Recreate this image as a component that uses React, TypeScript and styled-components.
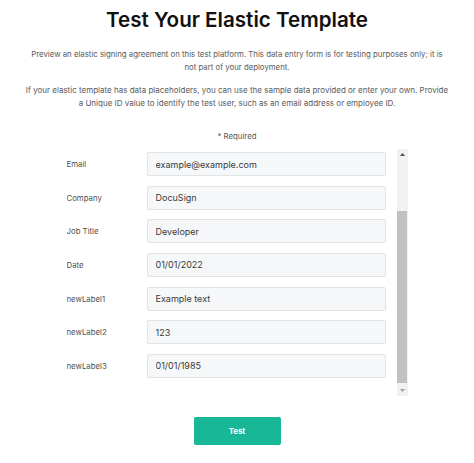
import React from 'react'
import styled, { createGlobalStyle } from 'styled-components'

const GlobalStyle = createGlobalStyle`
    html, body {
        margin: 0;
        padding: 0;
        background: #ffffff;
    }
    body {
        font-family: Inter, "Open Sans", "Liberation Sans", sans-serif;
        color: #222;
    }
`

const Page = styled.div`
    width: 474px;
    display: flex;
    flex-direction: column;
    align-items: center;
    padding-top: 6px;
`

const Title = styled.h1`
    margin: 0;
    font-size: 20.6px;
    font-weight: 600;
    line-height: 28px;
    color: #111;
`

const Intro = styled.p<{ $width: number; $size: number }>`
    margin: 0;
    width: ${(p) => p.$width}px;
    text-align: center;
    font-size: ${(p) => p.$size}px;
    line-height: 12.5px;
    color: #5a5a5a;
    & + & {
        margin-top: 11px;
    }
    &:first-of-type {
        margin-top: 14px;
    }
`

const Required = styled.div`
    margin-top: 21px;
    font-size: 7.8px;
    line-height: 12px;
    color: #555;
`

const FormBox = styled.div`
    margin-top: 7px;
    width: 341px;
    height: 247px;
    display: flex;
    overflow: hidden;
`

const FieldList = styled.div`
    flex: 1;
    display: flex;
    flex-direction: column;
    gap: 9.67px;
    padding-top: 3px;
`

const Row = styled.label`
    display: grid;
    grid-template-columns: 80px 239px;
    align-items: center;
    height: 24px;
`

const Label = styled.span`
    font-size: 7.8px;
    color: #4f4f4f;
`

const Input = styled.input`
    box-sizing: border-box;
    width: 239px;
    height: 24px;
    padding: 0 8px;
    border: 1px solid #e2e3e5;
    border-radius: 2px;
    background: #f6f7f8;
    font-family: Inter, "Open Sans", "Liberation Sans", sans-serif;
    font-size: 9px;
    color: #3a3a3a;
    outline: none;
`

const ScrollBar = styled.div`
    width: 11px;
    display: flex;
    flex-direction: column;
    background: #f1f1f1;
`

const ScrollButton = styled.div`
    height: 11px;
    display: flex;
    align-items: center;
    justify-content: center;
`

const ScrollTrack = styled.div`
    flex: 1;
    display: flex;
    flex-direction: column;
    padding: 0 0.5px;
`

const Thumb = styled.div<{ $offset: number; $size: number }>`
    margin-top: ${(p) => p.$offset}px;
    height: ${(p) => p.$size}px;
    background: #c1c1c1;
`

const TestButton = styled.button`
    margin-top: 21px;
    width: 87px;
    height: 28px;
    border: none;
    border-radius: 2px;
    background: #17b797;
    color: #fff;
    font-family: Inter, "Open Sans", "Liberation Sans", sans-serif;
    font-size: 7.8px;
    font-weight: 700;
    cursor: pointer;
`

const Arrow = ({ up, color }: { up?: boolean; color: string }) => (
    <svg width="5" height="3" viewBox="0 0 5 3">
        <path d={up ? 'M0 3 L2.5 0 L5 3 Z' : 'M0 0 L2.5 3 L5 0 Z'} fill={color} />
    </svg>
)

const fields = [
    { label: 'Email', value: 'example@example.com' },
    { label: 'Company', value: 'DocuSign' },
    { label: 'Job Title', value: 'Developer' },
    { label: 'Date', value: '01/01/2022' },
    { label: 'newLabel1', value: 'Example text' },
    { label: 'newLabel2', value: '123' },
    { label: 'newLabel3', value: '01/01/1985' },
]

const App: React.FC = () => {
    return (
        <>
            <GlobalStyle />
            <Page>
                <Title>Test Your Elastic Template</Title>
                <Intro $width={456} $size={7.8}>
                    Preview an elastic signing agreement on this test platform. This data entry form is for testing purposes only; it is
                    <br />
                    not part of your deployment.
                </Intro>
                <Intro $width={427} $size={8}>
                    If your elastic template has data placeholders, you can use the sample data provided or enter your own. Provide a Unique ID value to identify the test user, such as an email address or employee ID.
                </Intro>
                <Required>* Required</Required>
                <FormBox>
                    <FieldList>
                        {fields.map((f) => (
                            <Row key={f.label}>
                                <Label>{f.label}</Label>
                                <Input defaultValue={f.value} />
                            </Row>
                        ))}
                    </FieldList>
                    <ScrollBar>
                        <ScrollButton><Arrow up color="#505050" /></ScrollButton>
                        <ScrollTrack>
                            <Thumb $offset={51} $size={172} />
                        </ScrollTrack>
                        <ScrollButton><Arrow color="#a3a3a3" /></ScrollButton>
                    </ScrollBar>
                </FormBox>
                <TestButton>Test</TestButton>
            </Page>
        </>
    )
}

export default App
